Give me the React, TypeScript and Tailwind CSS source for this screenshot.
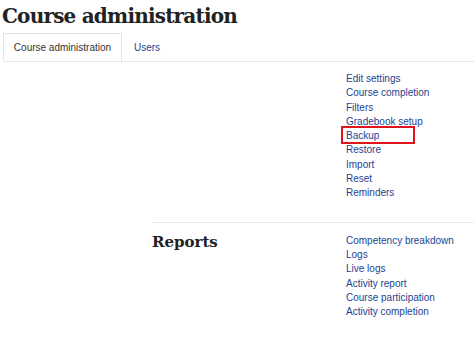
const courseLinks = [
  "Edit settings",
  "Course completion",
  "Filters",
  "Gradebook setup",
  "Backup",
  "Restore",
  "Import",
  "Reset",
  "Reminders",
];

const reportLinks = [
  "Competency breakdown",
  "Logs",
  "Live logs",
  "Activity report",
  "Course participation",
  "Activity completion",
];

const sans = "font-['Liberation_Sans',Arial,sans-serif]";
const serif = "font-['DejaVu_Serif','Liberation_Serif',serif]";

export default function App() {
  return (
    <div className="w-[474px] h-[339px] overflow-hidden bg-white">
      {/* Page title */}
      <h1 className={`${serif} font-bold text-[20px] leading-none text-[#222] pl-[2px] pt-[6px] tracking-[-0.8px]`}>
        Course administration
      </h1>

      {/* Tabs */}
      <div className={`${sans} mt-[7px] ml-[3px] flex border-b border-[#e6e6e6] text-[10px]`}>
        <div className="-mb-px h-[28px] w-[119px] flex items-center justify-center border border-[#e3e3e3] border-b-white bg-white text-[#333]">
          Course administration
        </div>
        <div className="h-[28px] flex items-center pl-[12px] text-[#1d3f8f]">Users</div>
      </div>

      {/* Course section */}
      <div className="flex pt-[10px]">
        <div className="w-[346px]" />
        <ul className={`${sans} text-[10px] leading-[14.3px] text-[#1d3f8f]`}>
          {courseLinks.map((l) => (
            <li key={l} className="relative">
              {l}
              {l === "Backup" && (
                <span className="absolute left-[-5px] top-[-3px] w-[74px] h-[18px] border-2 border-[#e0141b]" />
              )}
            </li>
          ))}
        </ul>
      </div>

      {/* Reports section */}
      <div className="ml-[152px] mt-[21px] border-t border-[#ebebeb] flex pt-[11px]">
        <h2 className={`${serif} font-bold text-[15px] leading-[16px] text-[#222] w-[194px]`}>Reports</h2>
        <ul className={`${sans} text-[10px] leading-[14.3px] text-[#1d3f8f]`}>
          {reportLinks.map((l) => (
            <li key={l}>{l}</li>
          ))}
        </ul>
      </div>
    </div>
  );
}
